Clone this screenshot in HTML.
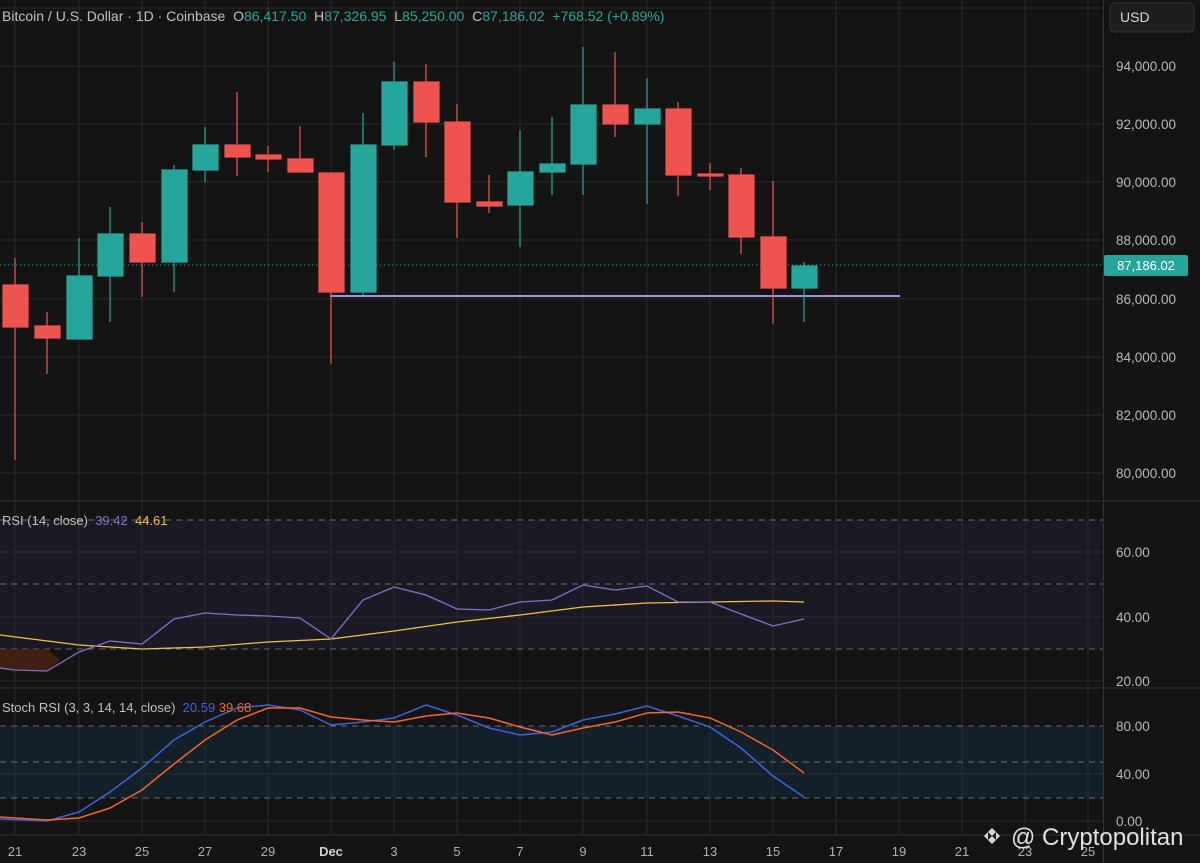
<!DOCTYPE html>
<html><head><meta charset="utf-8"><style>
html,body{margin:0;padding:0;background:#141414;width:1200px;height:863px;overflow:hidden}
svg{display:block}
text{font-family:"Liberation Sans",sans-serif}
</style></head><body>
<svg width="1200" height="863" viewBox="0 0 1200 863" xmlns="http://www.w3.org/2000/svg">
<rect width="1200" height="863" fill="#141414"/>
<rect x="0" y="520" width="1103" height="129" fill="#1b1a24"/>
<rect x="0" y="726" width="1103" height="72" fill="#142029"/>
<g stroke="#2a2a2a" stroke-width="1">
<line x1="15" y1="0" x2="15" y2="835"/><line x1="79" y1="0" x2="79" y2="835"/><line x1="142" y1="0" x2="142" y2="835"/><line x1="205" y1="0" x2="205" y2="835"/><line x1="268" y1="0" x2="268" y2="835"/><line x1="331" y1="0" x2="331" y2="835"/><line x1="394" y1="0" x2="394" y2="835"/><line x1="457" y1="0" x2="457" y2="835"/><line x1="520" y1="0" x2="520" y2="835"/><line x1="583" y1="0" x2="583" y2="835"/><line x1="647" y1="0" x2="647" y2="835"/><line x1="710" y1="0" x2="710" y2="835"/><line x1="773" y1="0" x2="773" y2="835"/><line x1="836" y1="0" x2="836" y2="835"/><line x1="899" y1="0" x2="899" y2="835"/><line x1="962" y1="0" x2="962" y2="835"/><line x1="1025" y1="0" x2="1025" y2="835"/><line x1="1088" y1="0" x2="1088" y2="835"/>
<line x1="0" y1="8" x2="1103" y2="8"/><line x1="0" y1="66" x2="1103" y2="66"/><line x1="0" y1="124" x2="1103" y2="124"/><line x1="0" y1="182" x2="1103" y2="182"/><line x1="0" y1="240" x2="1103" y2="240"/><line x1="0" y1="299" x2="1103" y2="299"/><line x1="0" y1="357" x2="1103" y2="357"/><line x1="0" y1="415" x2="1103" y2="415"/><line x1="0" y1="473" x2="1103" y2="473"/>
<line x1="0" y1="552" x2="1103" y2="552"/><line x1="0" y1="617" x2="1103" y2="617"/><line x1="0" y1="681" x2="1103" y2="681"/>
<line x1="0" y1="774" x2="1103" y2="774"/><line x1="0" y1="821" x2="1103" y2="821"/>
</g>
<g stroke="#333" stroke-width="1">
<line x1="0" y1="501" x2="1200" y2="501"/><line x1="0" y1="688" x2="1200" y2="688"/><line x1="0" y1="835" x2="1200" y2="835"/>
<line x1="1103.5" y1="0" x2="1103.5" y2="863"/>
</g>
<g stroke="#6a6a6a" stroke-width="1" stroke-dasharray="6,5">
<line x1="0" y1="520" x2="1103" y2="520"/><line x1="0" y1="584" x2="1103" y2="584"/><line x1="0" y1="649" x2="1103" y2="649"/>
<line x1="0" y1="726" x2="1103" y2="726"/><line x1="0" y1="762" x2="1103" y2="762"/><line x1="0" y1="798" x2="1103" y2="798"/>
</g>
<polygon points="0,649 47,649 60,660 47,671 15,670 0,668" fill="#4a2212" opacity="0.8"/>
<line x1="0" y1="265" x2="1103" y2="265" stroke="#26a69a" stroke-width="1" stroke-dasharray="1,3"/>
<line x1="330" y1="296" x2="900" y2="296" stroke="#9c94e0" stroke-width="2"/>
<g stroke-width="1.2">
<g fill="#ef5350" stroke="#ef5350">
<line x1="15" y1="258" x2="15" y2="460"/><rect x="3" y="285" width="25" height="42"/>
<line x1="47" y1="312" x2="47" y2="374"/><rect x="35" y="326" width="25" height="12"/>
<line x1="142" y1="222" x2="142" y2="297"/><rect x="130" y="234" width="25" height="28"/>
<line x1="237" y1="92" x2="237" y2="176"/><rect x="225" y="145" width="25" height="12"/>
<line x1="268" y1="146" x2="268" y2="172"/><rect x="256" y="155" width="25" height="4"/>
<line x1="300" y1="126" x2="300" y2="172"/><rect x="288" y="159" width="25" height="13"/>
<line x1="331" y1="173" x2="331" y2="364"/><rect x="319" y="173" width="25" height="119"/>
<line x1="426" y1="64" x2="426" y2="157"/><rect x="414" y="82" width="25" height="40"/>
<line x1="457" y1="104" x2="457" y2="238"/><rect x="445" y="122" width="25" height="80"/>
<line x1="489" y1="175" x2="489" y2="213"/><rect x="477" y="202" width="25" height="4"/>
<line x1="615" y1="52" x2="615" y2="137"/><rect x="603" y="105" width="25" height="19"/>
<line x1="678" y1="102" x2="678" y2="196"/><rect x="666" y="109" width="25" height="66"/>
<line x1="710" y1="163" x2="710" y2="190"/><rect x="698" y="174" width="25" height="2"/>
<line x1="741" y1="168" x2="741" y2="254"/><rect x="729" y="175" width="25" height="62"/>
<line x1="773" y1="181" x2="773" y2="324"/><rect x="761" y="237" width="25" height="51"/>
</g>
<g fill="#26a69a" stroke="#26a69a">
<line x1="79" y1="238" x2="79" y2="339"/><rect x="67" y="276" width="25" height="63"/>
<line x1="110" y1="207" x2="110" y2="322"/><rect x="98" y="234" width="25" height="42"/>
<line x1="174" y1="165" x2="174" y2="292"/><rect x="162" y="170" width="25" height="92"/>
<line x1="205" y1="127" x2="205" y2="182"/><rect x="193" y="145" width="25" height="25"/>
<line x1="363" y1="113" x2="363" y2="295"/><rect x="351" y="145" width="25" height="147"/>
<line x1="394" y1="62" x2="394" y2="150"/><rect x="382" y="82" width="25" height="63"/>
<line x1="520" y1="130" x2="520" y2="247"/><rect x="508" y="172" width="25" height="33"/>
<line x1="552" y1="117" x2="552" y2="195"/><rect x="540" y="164" width="25" height="8"/>
<line x1="583" y1="47" x2="583" y2="195"/><rect x="571" y="105" width="25" height="59"/>
<line x1="647" y1="78" x2="647" y2="204"/><rect x="635" y="109" width="25" height="15"/>
<line x1="804" y1="262" x2="804" y2="322"/><rect x="792" y="266" width="25" height="22"/>
</g>
</g>
<polyline fill="none" stroke="#f0c040" stroke-width="1.3" points="0,635 79,645 142,649 205,647 268,642 331,639 394,631 457,622 520,615 583,607 647,603 710,602 773,601 804,602"/>
<polyline fill="none" stroke="#7e73c8" stroke-width="1.3" points="0,668 15,670 47,671 79,652 110,641 142,644 174,619 205,613 237,615 268,616 300,618 331,639 363,600 394,587 426,595 457,609 489,610 520,602 552,600 583,585 615,590 647,586 678,602 710,602 741,614 773,626 804,619"/>
<polyline fill="none" stroke="#3d63d6" stroke-width="1.5" points="0,819 47,821 79,812 110,792 142,768 174,740 205,722 237,708 268,705 300,710 331,725 363,722 394,718 426,705 457,715 489,728 520,735 552,732 583,720 615,714 647,706 678,716 710,727 741,748 773,776 804,797"/>
<polyline fill="none" stroke="#f0672a" stroke-width="1.5" points="0,817 47,820 79,818 110,808 142,790 174,764 205,740 237,720 268,708 300,708 331,717 363,720 394,722 426,716 457,713 489,718 520,727 552,735 583,728 615,722 647,713 678,712 710,718 741,732 773,750 804,773"/>
<g fill="#b8b8b8" font-size="13.5">
<text x="1116" y="71">94,000.00</text><text x="1116" y="129">92,000.00</text><text x="1116" y="187">90,000.00</text><text x="1116" y="245">88,000.00</text><text x="1116" y="304">86,000.00</text><text x="1116" y="362">84,000.00</text><text x="1116" y="420">82,000.00</text><text x="1116" y="478">80,000.00</text>
<text x="1116" y="557">60.00</text><text x="1116" y="622">40.00</text><text x="1116" y="686">20.00</text>
<text x="1116" y="731">80.00</text><text x="1116" y="779">40.00</text><text x="1116" y="826">0.00</text>
</g>
<rect x="1110" y="3" width="84" height="29" rx="5" fill="#1e1e1e" stroke="#333"/>
<text x="1120" y="22" fill="#d8d8d8" font-size="14">USD</text>
<rect x="1104" y="255" width="84" height="21" rx="2" fill="#26a69a"/>
<text x="1146" y="270" fill="#fff" font-size="13" text-anchor="middle">87,186.02</text>
<g fill="#b0b0b0" font-size="13" text-anchor="middle">
<text x="15" y="856">21</text><text x="79" y="856">23</text><text x="142" y="856">25</text><text x="205" y="856">27</text><text x="268" y="856">29</text><text x="331" y="856" font-weight="bold" fill="#d0d0d0">Dec</text><text x="394" y="856">3</text><text x="457" y="856">5</text><text x="520" y="856">7</text><text x="583" y="856">9</text><text x="647" y="856">11</text><text x="710" y="856">13</text><text x="773" y="856">15</text><text x="836" y="856">17</text><text x="899" y="856">19</text><text x="962" y="856">21</text><text x="1025" y="856">23</text><text x="1088" y="856">25</text>
</g>
<g fill="#d8d8d8" transform="translate(992,836)">
<polygon points="0,-8 4,-4 0,0 -4,-4"/><polygon points="0,0 4,4 0,8 -4,4"/><polygon points="-8,0 -4,-4 -4,4"/><polygon points="8,0 4,-4 4,4"/>
</g>
<text x="1011" y="845" fill="#e0e0e0" font-size="24">@ Cryptopolitan</text>
<text x="2" y="21" font-size="14" fill="#c0c0c0" xml:space="preserve">Bitcoin / U.S. Dollar · 1D · Coinbase  O<tspan fill="#26a69a">86,417.50</tspan>  H<tspan fill="#26a69a">87,326.95</tspan>  L<tspan fill="#26a69a">85,250.00</tspan>  C<tspan fill="#26a69a">87,186.02  +768.52 (+0.89%)</tspan></text>
<text x="2" y="525" font-size="13" fill="#c0c0c0" xml:space="preserve">RSI (14, close)  <tspan fill="#7e73c8">39.42</tspan>  <tspan fill="#f0c040">44.61</tspan></text>
<text x="2" y="712" font-size="13" fill="#c0c0c0" xml:space="preserve">Stoch RSI (3, 3, 14, 14, close)  <tspan fill="#3d63d6">20.59</tspan> <tspan fill="#f0672a">39.68</tspan></text>
</svg>
</body></html>
